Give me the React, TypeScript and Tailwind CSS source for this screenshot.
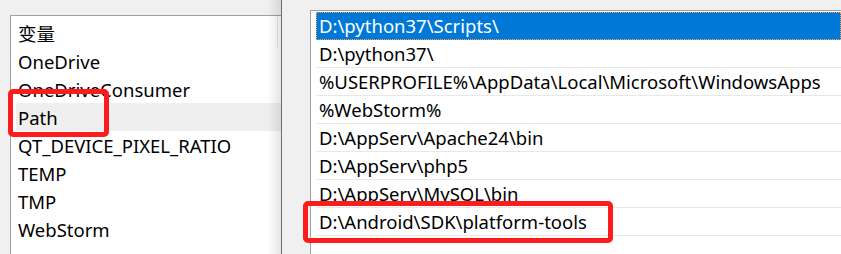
const leftItems = [
  "变量",
  "OneDrive",
  "OneDriveConsumer",
  "Path",
  "QT_DEVICE_PIXEL_RATIO",
  "TEMP",
  "TMP",
  "WebStorm",
];

const pathItems = [
  "D:\\python37\\Scripts\\",
  "D:\\python37\\",
  "%USERPROFILE%\\AppData\\Local\\Microsoft\\WindowsApps",
  "%WebStorm%",
  "D:\\AppServ\\Apache24\\bin",
  "D:\\AppServ\\php5",
  "D:\\AppServ\\MySQL\\bin",
  "D:\\Android\\SDK\\platform-tools",
];

export default function App() {
  return (
    <div
      className="relative flex w-[841px] h-[254px] overflow-hidden bg-[#f0f0f0] text-[18.5px] text-black"
      style={{ fontFamily: '"Noto Sans", "Noto Sans CJK SC", sans-serif' }}
    >
      {/* 变量列表 */}
      <div className="relative w-[281px] shrink-0 pt-[15px] pl-[10px]">
        <div className="relative h-full border-l border-t border-[#a0a0a0] bg-white pt-[3px] pl-[5px]">
          <div className="absolute left-[266px] top-[1px] h-[30px] w-px bg-[#e4e4e4]" />
          {leftItems.map((name) => (
            <div
              key={name}
              className={`flex h-[28px] items-center pt-[2px] pl-[2px] leading-none whitespace-nowrap ${name === "Path" ? "bg-[#efefef]" : ""}`}
            >
              {name}
            </div>
          ))}
        </div>
        <div className="pointer-events-none absolute right-0 top-0 h-full w-[14px] bg-gradient-to-r from-transparent to-[rgba(0,0,0,0.1)]" />
      </div>
      <div className="w-px shrink-0 bg-[#6e6e6e]" />

      {/* 编辑环境变量 */}
      <div className="flex-1 pt-[10px] pl-[28px]">
        <div className="h-full border-l border-t border-[#a0a0a0] bg-white pt-[1px] pl-[5px]">
          {pathItems.map((p, i) => (
            <div
              key={p}
              className={`flex h-[28px] items-center pt-[2px] pl-[3px] leading-none whitespace-nowrap border-b ${
                i === 0
                  ? "bg-[#0078d7] text-white border-[#0078d7] outline-1 outline-dotted outline-[#ffa24a] -outline-offset-1"
                  : "border-[#e8e8e8]"
              }`}
            >
              {p}
            </div>
          ))}
        </div>
      </div>

      {/* 标注 */}
      <div className="pointer-events-none absolute left-[8px] top-[89px] h-[48px] w-[101px] rounded-[5px] border-[5px] border-[#fc1c1c]" />
      <div className="pointer-events-none absolute left-[303px] top-[201px] h-[42px] w-[310px] rounded-[5px] border-[5px] border-[#fc1c1c]" />
    </div>
  );
}
